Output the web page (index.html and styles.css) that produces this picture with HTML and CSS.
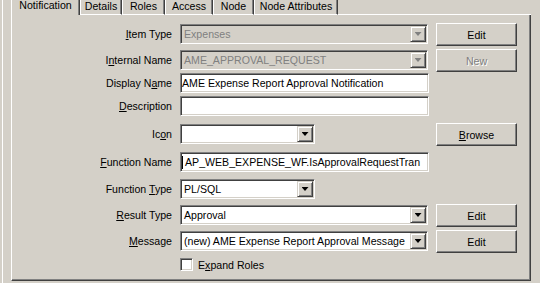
FILE: index.html
```html
<!DOCTYPE html>
<html lang="en">
<head>
<meta charset="UTF-8">
<title>Notification properties</title>
<link rel="stylesheet" href="styles.css">
</head>
<body>
<div class="frame">
  <div class="tabs">
    <div class="tab active tab-notif">Notification</div>
    <div class="tab tab-details">Details</div>
    <div class="tab tab-roles">Roles</div>
    <div class="tab tab-access">Access</div>
    <div class="tab tab-node">Node</div>
    <div class="tab tab-attrs">Node Attributes</div>
    <div class="tab-fill"></div>
  </div>

  <div class="panel">
    <div class="row">
      <div class="lbl"><u>I</u>tem Type</div>
      <div class="field combo w-combo disabled"><span class="val">Expenses</span><span class="arrow"></span></div>
      <button class="btn">Edit</button>
    </div>
    <div class="row gap3">
      <div class="lbl">I<u>n</u>ternal Name</div>
      <div class="field combo w-combo disabled"><span class="val">AME_APPROVAL_REQUEST</span><span class="arrow"></span></div>
      <button class="btn disabled">New</button>
    </div>
    <div class="row">
      <div class="lbl">Display N<u>a</u>me</div>
      <div class="field w-full"><span class="val tight">AME Expense Report Approval Notification</span></div>
    </div>
    <div class="row">
      <div class="lbl"><u>D</u>escription</div>
      <div class="field w-full"><span class="val tight"></span></div>
    </div>
    <div class="row gap5">
      <div class="lbl">Ic<u>o</u>n</div>
      <div class="field combo w-small"><span class="val"></span><span class="arrow"></span></div>
      <button class="btn"><u>B</u>rowse</button>
    </div>
    <div class="row gap5">
      <div class="lbl"><u>F</u>unction Name</div>
      <div class="field w-full"><span class="val tight"><span class="caret"></span>AP_WEB_EXPENSE_WF.IsApprovalRequestTran</span></div>
    </div>
    <div class="row gap4">
      <div class="lbl">Function <u>T</u>ype</div>
      <div class="field combo w-small"><span class="val">PL/SQL</span><span class="arrow"></span></div>
    </div>
    <div class="row gap3">
      <div class="lbl"><u>R</u>esult Type</div>
      <div class="field combo w-combo"><span class="val">Approval</span><span class="arrow"></span></div>
      <button class="btn">Edit</button>
    </div>
    <div class="row gap3">
      <div class="lbl"><u>M</u>essage</div>
      <div class="field combo w-combo"><span class="val">(new) AME Expense Report Approval Message</span><span class="arrow"></span></div>
      <button class="btn">Edit</button>
    </div>
    <div class="row">
      <div></div>
      <div class="check-line"><span class="checkbox"></span>E<u>x</u>pand Roles</div>
    </div>
  </div>
</div>
</body>
</html>
```

FILE: styles.css
```css
body{margin:0;background:#d4d0c8;color:#000;font:10.6px "Liberation Sans",Arial,sans-serif;overflow:hidden;}
u{text-decoration:underline;text-underline-offset:1px;}

.frame{margin-left:2px;border-left:1px solid #fff;padding-left:8px;height:283px;box-sizing:border-box;}

/* tab strip */
.tabs{display:flex;width:520px;height:15px;}
.tab{box-sizing:border-box;height:15px;border-left:1px solid #fff;border-right:1px solid #404040;border-bottom:1px solid #fff;box-shadow:inset -1px 0 0 #808080;text-align:center;line-height:13px;white-space:nowrap;}
.tab.active{border-bottom:0;line-height:11px;}
.tab-fill{flex:1;height:15px;box-sizing:border-box;border-bottom:1px solid #fff;}
.tab-notif{width:69px;}
.tab-details{width:42px;}
.tab-roles{width:43px;}
.tab-access{width:48px;}
.tab-node{width:41px;}
.tab-attrs{width:84px;}

/* page body */
.panel{box-sizing:border-box;width:520px;height:266px;padding-top:8px;border-left:1px solid #fff;border-right:1px solid #404040;border-bottom:1px solid #404040;box-shadow:inset -1px -1px 0 #808080;}

.row{display:grid;grid-template-columns:161px 249px 81px;column-gap:7px;height:23px;align-items:start;}
.gap3{margin-top:3px;}
.gap4{margin-top:4px;}
.gap5{margin-top:5px;}
.lbl{text-align:right;padding-right:1px;line-height:23px;white-space:nowrap;}

/* sunken fields */
.field{box-sizing:border-box;height:20px;margin-top:1px;display:flex;align-items:center;background:#fff;border:1px solid;border-color:#808080 #fff #fff #808080;box-shadow:inset 1px 1px 0 #404040,inset -1px -1px 0 #d4d0c8;overflow:hidden;white-space:nowrap;}
.w-full{width:249px;}
.w-combo{width:248px;}
.w-small{width:135px;}
.val{flex:1;min-width:0;padding-left:3px;overflow:hidden;line-height:18px;}
.val.tight{padding-left:1px;}
.caret{display:inline-block;width:1px;height:13px;background:#000;margin-right:2px;vertical-align:-3px;}

.field.disabled{background:#d4d0c8;color:#808080;}

.arrow{box-sizing:border-box;width:16px;height:16px;margin:1px 1px 1px 0;flex:none;display:flex;align-items:center;justify-content:center;background:#d4d0c8;border:1px solid;border-color:#d4d0c8 #404040 #404040 #d4d0c8;box-shadow:inset 1px 1px 0 #fff,inset -1px -1px 0 #808080;}
.arrow::after{content:"";width:7px;height:4px;background:#000;clip-path:polygon(0 0,100% 0,50% 100%);}
.disabled .arrow::after{background:#808080;}

/* push buttons */
.btn{box-sizing:border-box;width:81px;height:23px;padding:0;background:#d4d0c8;color:#000;font:inherit;border:1px solid;border-color:#fff #404040 #404040 #fff;box-shadow:inset -1px -1px 0 #808080;}
.btn.disabled{color:#808080;text-shadow:1px 1px 0 #fff;}

/* check box */
.check-line{display:flex;align-items:center;height:23px;white-space:nowrap;}
.checkbox{box-sizing:border-box;width:13px;height:13px;margin-right:5px;background:#fff;border:1px solid;border-color:#808080 #fff #fff #808080;box-shadow:inset 1px 1px 0 #404040,inset -1px -1px 0 #d4d0c8;}
```
